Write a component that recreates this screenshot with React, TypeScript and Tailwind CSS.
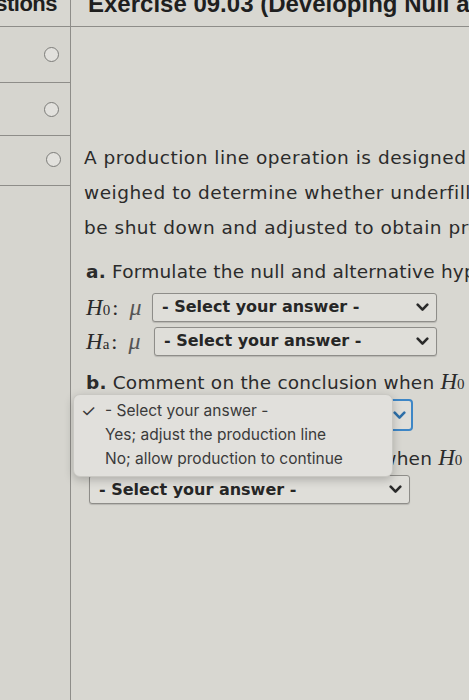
import React from "react";

const line = "border-[#8e8d89]";

function Radio() {
  return (
    <span className="block w-[15px] h-[15px] rounded-full border-[1.5px] border-[#7c7c79] bg-[#e2e1dd]" />
  );
}

function Chevron({ className = "" }: { className?: string }) {
  return (
    <svg width="13" height="9" viewBox="0 0 13 9" className={className}>
      <path d="M1.7 1.7 L6.5 6.6 L11.3 1.7" fill="none" stroke="currentColor" strokeWidth="2.6" strokeLinecap="round" strokeLinejoin="round" />
    </svg>
  );
}

function Select({ className = "" }: { className?: string }) {
  return (
    <div
      className={`flex items-center justify-between h-[29px] rounded-[3px] border ${line} bg-[#dfded9] pl-[9px] pr-[7px] shadow-[0_1px_1px_rgba(0,0,0,0.15)] tracking-normal ${className}`}
    >
      <span className="text-[16px] font-bold text-[#262626] leading-none">- Select your answer -</span>
      <Chevron className="text-[#2a2a2a]" />
    </div>
  );
}

function H0({ sub }: { sub: string }) {
  return (
    <span className="font-['Liberation_Serif',serif] whitespace-nowrap tracking-normal">
      <i className="text-[23px]">H</i>
      <span className="text-[15px]">{sub}</span>
    </span>
  );
}

function Hyp({ sub }: { sub: string }) {
  return (
    <span className="font-['Liberation_Serif',serif] text-[22px] text-[#2a2a2a] whitespace-nowrap w-[66px] shrink-0">
      <H0 sub={sub} />
      <span className="ml-[2px]">:</span>
      <i className="ml-[11px] text-[24px] text-[#555]">μ</i>
    </span>
  );
}

export default function App() {
  return (
    <div className="relative w-[469px] h-[700px] overflow-hidden bg-[#d8d7d1] font-['DejaVu_Sans',sans-serif] text-[#2b2b2b]">
      {/* header row */}
      <div className={`flex h-[27px] border-b ${line}`}>
        <div className={`w-[71px] shrink-0 border-r ${line} flex justify-end pr-[13px] overflow-hidden`}>
          <div className="font-['Liberation_Sans',sans-serif] font-bold text-[22px] tracking-[-0.5px] leading-[24px] mt-[-8px] text-[#1f1f1f] whitespace-nowrap">
            stions
          </div>
        </div>
        <div className="flex-1 overflow-hidden pl-[17px]">
          <div className="font-['Liberation_Sans',sans-serif] font-bold text-[24px] leading-[24px] mt-[-8px] text-[#1f1f1f] whitespace-nowrap">
            Exercise 09.03 (Developing Null and Alternative Hypotheses)
          </div>
        </div>
      </div>

      {/* body */}
      <div className="flex h-[673px]">
        <div className={`w-[71px] shrink-0 border-r ${line} bg-[#d6d5cf]`}>
          <div className={`h-[56px] border-b ${line} flex items-center justify-end pr-[11px]`}>
            <Radio />
          </div>
          <div className={`h-[53px] border-b ${line} flex items-center justify-end pr-[11px]`}>
            <Radio />
          </div>
          <div className={`h-[50px] border-b ${line} flex items-start justify-end pr-[9px] pt-[16px]`}>
            <Radio />
          </div>
        </div>

        <div className="flex-1 overflow-hidden pl-[13px] pt-[113px] text-[18.5px] tracking-[0.2px]">
          <div className="leading-[35px] whitespace-nowrap tracking-[0.5px]">
            <div>A production line operation is designed to fill cartons with laundry detergent to a mean weight of 32 ounces.</div>
            <div>weighed to determine whether underfilling or overfilling is occurring. If the sample data lead to a conclusion</div>
            <div>be shut down and adjusted to obtain proper filling.</div>
          </div>

          <div className="mt-[12px] h-[30px] leading-[30px] whitespace-nowrap pl-[2px]">
            <b>a.</b> Formulate the null and alternative hypotheses.
          </div>
          <div className="mt-[3px] h-[34px] flex items-center pl-[2px]">
            <Hyp sub="0" />
            <Select className="w-[285px]" />
          </div>
          <div className="h-[34px] flex items-center pl-[2px]">
            <Hyp sub="a" />
            <Select className="w-[283px] ml-[2px]" />
          </div>

          <div className="mt-[9px] h-[30px] leading-[30px] whitespace-nowrap pl-[2px]">
            <b>b.</b> Comment on the conclusion when <H0 sub="0" /> cannot be rejected.
          </div>
          <div className="h-[36px] flex items-center pl-[5px]">
            <div className="w-[324px] h-[32px] rounded-[4px] border-2 border-[#3d86c6] bg-[#dfded9] flex items-center justify-end pr-[5px]">
              <Chevron className="text-[#2d6fa8]" />
            </div>
          </div>

          <div className="mt-[8px] h-[34px] leading-[34px] whitespace-nowrap pl-[2px]">
            <b>c.</b> Comment on the conclusion when <H0 sub="0" /> can be rejected.
          </div>
          <div className="pl-[5px]">
            <Select className="w-[321px] h-[28px]" />
          </div>
        </div>
      </div>

      {/* open select menu */}
      <div className="absolute left-[73px] top-[394px] w-[320px] h-[83px] rounded-[7px] bg-[#e1e0dc] border border-[#c9c8c3] shadow-[0_3px_10px_rgba(0,0,0,0.22)] pt-[4px] font-['Inter',sans-serif] text-[15.5px] text-[#3a3a3a]">
        <div className="h-[24px] flex items-center">
          <span className="w-[31px] pl-[7px] text-[17px] leading-none">✓</span>
          <span>- Select your answer -</span>
        </div>
        <div className="h-[24px] flex items-center">
          <span className="w-[31px]" />
          <span>Yes; adjust the production line</span>
        </div>
        <div className="h-[24px] flex items-center">
          <span className="w-[31px]" />
          <span>No; allow production to continue</span>
        </div>
      </div>
    </div>
  );
}
